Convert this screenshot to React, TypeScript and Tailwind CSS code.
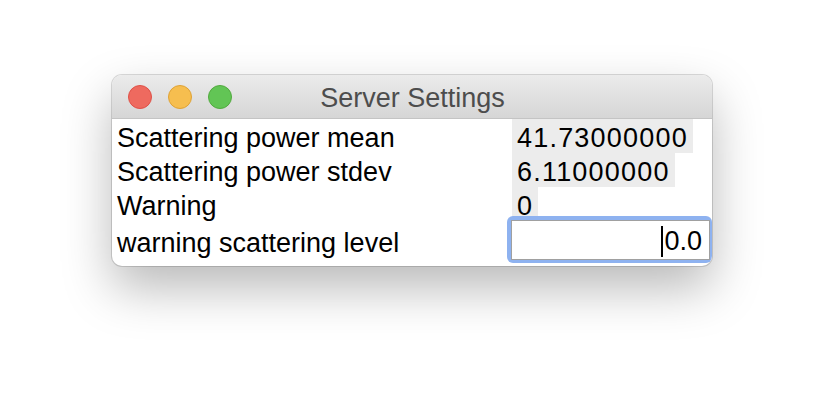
import React from 'react';

const rows = [
  { label: 'Scattering power mean', value: '41.73000000' },
  { label: 'Scattering power stdev', value: '6.11000000' },
  { label: 'Warning', value: '0' },
];

function TrafficLights() {
  return (
    <div className="flex items-center gap-[16px] pl-[16px] pt-[1px]">
      <span className="block h-[24px] w-[24px] rounded-full border border-[#de5148] bg-[#ee6a5f]" />
      <span className="block h-[24px] w-[24px] rounded-full border border-[#dea236] bg-[#f6be4f]" />
      <span className="block h-[24px] w-[24px] rounded-full border border-[#52a93f] bg-[#62c555]" />
    </div>
  );
}

export default function App() {
  return (
    <div className="min-h-[414px] w-[824px] bg-white pl-[112px] pt-[75px] font-['Liberation_Sans',Arial,sans-serif]">
      <div className="w-[600px] overflow-hidden rounded-[10px] bg-white shadow-[0_0_0_1px_rgba(0,0,0,0.14),0_22px_50px_rgba(0,0,0,0.28)]">
        <div className="relative flex h-[44px] items-center border-b border-[#c4c4c4] bg-gradient-to-b from-[#ebebeb] to-[#d6d6d6]">
          <TrafficLights />
          <div className="absolute inset-0 flex items-center justify-center pl-[1px] pt-[3px] text-[27px] leading-none text-[#4d4d4d]">
            Server Settings
          </div>
        </div>

        <div className="grid grid-cols-[400px_200px] text-[27px] leading-none text-black">
          {rows.map((r) => (
            <React.Fragment key={r.label}>
              <div className="flex h-[34px] items-center pl-[5px] pt-[4px]">{r.label}</div>
              <div className="flex h-[34px] items-stretch">
                <span className="flex items-center bg-[#ececec] px-[5px] pt-[4px] tracking-[1.2px]">{r.value}</span>
              </div>
            </React.Fragment>
          ))}
          <div className="flex h-[45px] items-center pl-[5px]">warning scattering level</div>
          <div className="flex h-[45px] items-start">
            <div className="relative z-10 -ml-[5px] -mt-[5px] w-[205px] rounded-[6px] bg-[#8eb2f0] p-[4px] pb-[3px] pr-[2px]">
              <div className="flex h-[40px] items-center justify-end border border-[#a0a0a0] bg-white px-[7px] pt-[3px] text-[27px] text-black">
                <span className="mr-[1px] h-[31px] w-[2px] bg-black" />
                <span>0.0</span>
              </div>
            </div>
          </div>
        </div>
      </div>
    </div>
  );
}
